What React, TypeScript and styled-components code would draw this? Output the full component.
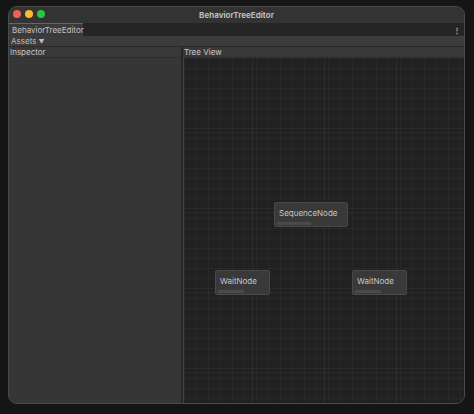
import styled, { createGlobalStyle } from "styled-components";

const GlobalStyle = createGlobalStyle`
  html, body {
    margin: 0;
    padding: 0;
    background: #151515;
    font-family: "Inter", "Liberation Sans", Arial, sans-serif;
  }
  * {
    box-sizing: border-box;
  }
`;

const Page = styled.div`
  width: 474px;
  height: 414px;
  padding: 6px 9px 10px 8px;
  display: flex;
`;

const Window = styled.div`
  flex: 1;
  display: flex;
  flex-direction: column;
  border: 1px solid #4a4a4a;
  border-radius: 9px;
  overflow: hidden;
  background: #383838;
`;

const TitleBar = styled.div`
  position: relative;
  height: 16px;
  flex-shrink: 0;
  display: flex;
  align-items: center;
  justify-content: center;
  background: #333333;
`;

const Lights = styled.div`
  position: absolute;
  left: 4px;
  top: 3px;
  display: flex;
  gap: 4px;
`;

const Light = styled.span<{ color: string }>`
  width: 8px;
  height: 8px;
  border-radius: 50%;
  background: ${(p) => p.color};
`;

const Title = styled.span`
  font-size: 8px;
  font-weight: 700;
  color: #bdbdbd;
`;

const TabBar = styled.div`
  height: 13px;
  flex-shrink: 0;
  display: flex;
  align-items: stretch;
  justify-content: space-between;
  background: #252525;
`;

const Tab = styled.div`
  width: 74px;
  padding-left: 3px;
  display: flex;
  align-items: center;
  font-size: 8px;
  color: #c4c4c4;
  background: #3a3a3a;
  border-top: 1px solid #4f6a8a;
`;

const Kebab = styled.span`
  width: 14px;
  display: flex;
  align-items: center;
  justify-content: center;
  font-size: 8px;
  font-weight: 700;
  color: #b0b0b0;
`;

const Toolbar = styled.div`
  height: 11px;
  flex-shrink: 0;
  display: flex;
  align-items: center;
  padding-left: 2px;
  font-size: 8px;
  color: #bdbdbd;
  background: #3c3c3c;
  border-bottom: 1px solid #2a2a2a;
`;

const Caret = styled.span`
  margin-left: 2px;
  font-size: 6px;
`;

const Body = styled.div`
  flex: 1;
  display: flex;
  min-height: 0;
`;

const Panel = styled.div<{ width?: number }>`
  display: flex;
  flex-direction: column;
  ${(p) => (p.width ? `width: ${p.width}px; flex-shrink: 0;` : "flex: 1;")}
  background: #383838;
`;

const Divider = styled.div`
  width: 2px;
  flex-shrink: 0;
  background: #262626;
`;

const PanelHeader = styled.div`
  height: 10px;
  flex-shrink: 0;
  display: flex;
  align-items: center;
  padding-left: 1px;
  font-size: 8px;
  color: #c8c8c8;
  background: #383838;
`;

const PanelFill = styled.div`
  flex: 1;
  background: #363636;
  border-top: 1px solid #2f2f2f;
`;

const Graph = styled.div`
  position: relative;
  flex: 1;
  background-color: #212121;
  border-top: 1px solid #2a2a2a;
  border-left: 1px solid #444;
  background-image:
    linear-gradient(to right, rgba(255, 255, 255, 0.05) 1px, transparent 1px),
    linear-gradient(to bottom, rgba(255, 255, 255, 0.05) 1px, transparent 1px),
    linear-gradient(to right, rgba(255, 255, 255, 0.03) 1px, transparent 1px),
    linear-gradient(to bottom, rgba(255, 255, 255, 0.03) 1px, transparent 1px);
  background-size: 72px 80px, 72px 80px, 12px 10px, 12px 10px;
  background-position: -4px -6px, -4px -6px, 0 0, 0 0;
`;

const Node = styled.div<{ x: number; y: number; w: number }>`
  position: absolute;
  left: ${(p) => p.x}px;
  top: ${(p) => p.y}px;
  width: ${(p) => p.w}px;
  height: 25px;
  display: flex;
  flex-direction: column;
  background: #393939;
  border: 1px solid #484848;
  border-radius: 2px;
`;

const NodeLabel = styled.div`
  flex: 1;
  display: flex;
  align-items: center;
  padding-left: 4px;
  font-size: 8px;
  color: #c8c8c8;
`;

const Port = styled.div<{ w: number }>`
  width: ${(p) => p.w}px;
  height: 3px;
  margin: 0 0 1px 2px;
  background: #4a4a4a;
`;

const nodes = [
  { label: "SequenceNode", x: 90, y: 144, w: 74, port: 34 },
  { label: "WaitNode", x: 31, y: 212, w: 55, port: 26 },
  { label: "WaitNode", x: 168, y: 212, w: 55, port: 26 },
];

export default function App() {
  return (
    <>
      <GlobalStyle />
      <Page>
        <Window>
          <TitleBar>
            <Lights>
              <Light color="#ee5f57" />
              <Light color="#f5bd2f" />
              <Light color="#27c73f" />
            </Lights>
            <Title>BehaviorTreeEditor</Title>
          </TitleBar>
          <TabBar>
            <Tab>BehaviorTreeEditor</Tab>
            <Kebab>⋮</Kebab>
          </TabBar>
          <Toolbar>
            Assets<Caret>▼</Caret>
          </Toolbar>
          <Body>
            <Panel width={172}>
              <PanelHeader>Inspector</PanelHeader>
              <PanelFill />
            </Panel>
            <Divider />
            <Panel>
              <PanelHeader>Tree View</PanelHeader>
              <Graph>
                {nodes.map((n, i) => (
                  <Node key={i} x={n.x} y={n.y} w={n.w}>
                    <NodeLabel>{n.label}</NodeLabel>
                    <Port w={n.port} />
                  </Node>
                ))}
              </Graph>
            </Panel>
          </Body>
        </Window>
      </Page>
    </>
  );
}
